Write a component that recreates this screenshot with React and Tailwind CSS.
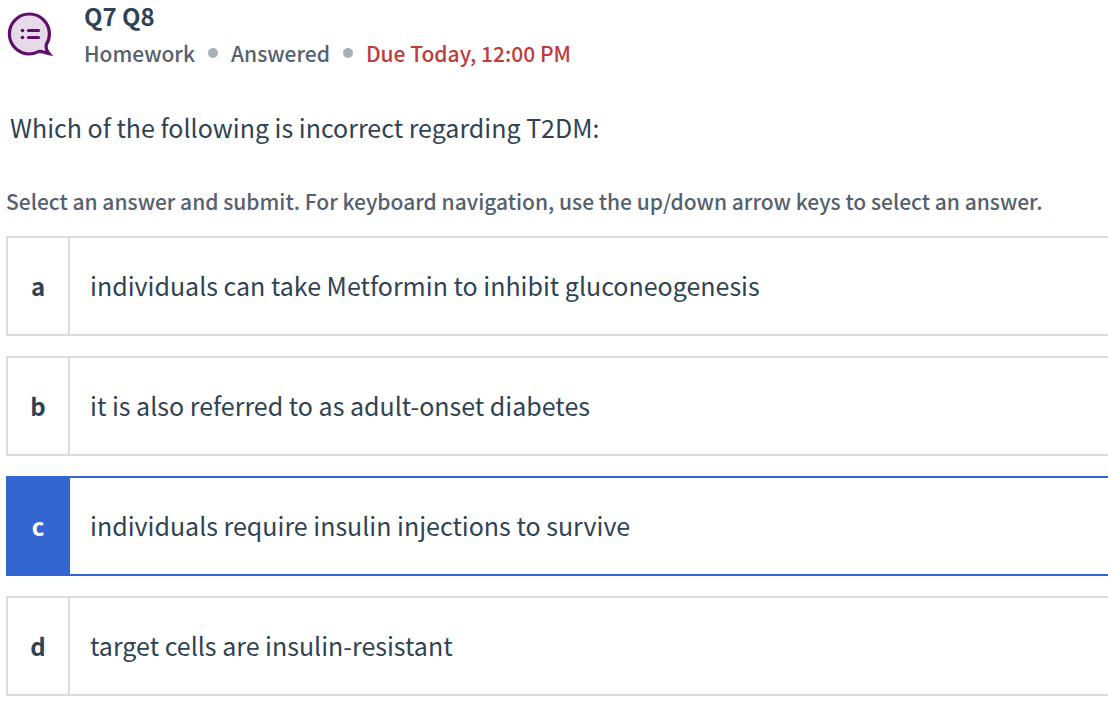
import { useState } from 'react';
import clsx from 'clsx';

const ANSWERS = [
  { id: 'a', text: 'individuals can take Metformin to inhibit gluconeogenesis' },
  { id: 'b', text: 'it is also referred to as adult-onset diabetes' },
  { id: 'c', text: 'individuals require insulin injections to survive' },
  { id: 'd', text: 'target cells are insulin-resistant' },
];

function QuestionIcon() {
  return (
    <svg className="w-11 h-11 shrink-0 overflow-visible" viewBox="0 0 44 44" fill="none" aria-hidden="true">
      <path
        d="M41 41.6C38.8 39.2 37.8 36.6 38.2 32.6C40.4 29.4 41.4 25.8 41.4 22A20 20 0 1 0 21.4 42C25 42 28 41 31.2 39.4C34.6 39.4 37.2 40.9 41 41.6Z"
        fill="#e6dae8"
        stroke="#5f0f68"
        strokeWidth="3.2"
        strokeLinejoin="miter"
        strokeMiterlimit="8"
      />
      <g stroke="#5f0f68" strokeWidth="3.2" strokeLinecap="round">
        <path d="M20.5 18.5H30.5" />
        <path d="M20.5 25.5H30.5" />
      </g>
      <circle cx="14.5" cy="18.5" r="1.8" fill="#5f0f68" />
      <circle cx="14.5" cy="25.5" r="1.8" fill="#5f0f68" />
    </svg>
  );
}

function Dot() {
  return <span className="w-2.5 h-2.5 rounded-full bg-[#a5b0ba]" />;
}

function Answer({ id, text, checked, onSelect }) {
  return (
    <label
      className={clsx(
        'flex h-[100px] cursor-pointer border-2 border-r-0',
        checked ? 'border-[#3466d1]' : 'border-[#d9dce0]'
      )}
    >
      <input
        type="radio"
        name="answer"
        value={id}
        checked={checked}
        onChange={() => onSelect(id)}
        className="sr-only"
      />
      <span
        className={clsx(
          'flex w-[62px] shrink-0 items-center justify-center border-r-2 text-2xl font-bold',
          checked ? 'border-[#3466d1] bg-[#3466d1] text-white' : 'border-[#d9dce0]'
        )}
      >
        {id}
      </span>
      <span className="flex items-center px-5">{text}</span>
    </label>
  );
}

export default function App() {
  const [selected, setSelected] = useState('c');

  return (
    <main className="min-h-screen bg-white pb-4 pl-1.5 font-['Noto_Sans_CJK_SC',sans-serif] text-[25px] text-[#2f4353]">
      <header className="flex items-start gap-8 pl-0.5">
        <div className="pt-3">
          <QuestionIcon />
        </div>
        <div>
          <h1 className="text-2xl leading-8 font-bold">Q7 Q8</h1>
          <div className="flex items-center gap-[13px] pt-1 text-[21px] leading-[34px] font-medium text-[#55616f]">
            <span>Homework</span>
            <Dot />
            <span>Answered</span>
            <Dot />
            <span className="text-[#c03b3b]">Due Today, 12:00 PM</span>
          </div>
        </div>
      </header>

      <h2 className="mt-[41px] pl-1 leading-8">Which of the following is incorrect regarding T2DM:</h2>

      <fieldset>
        <legend className="pt-[42px] pb-[19px] text-[21px] leading-8 font-medium text-[#55616f]">
          Select an answer and submit. For keyboard navigation, use the up/down arrow keys to select an answer.
        </legend>
        <div className="flex flex-col gap-5">
          {ANSWERS.map((answer) => (
            <Answer
              key={answer.id}
              id={answer.id}
              text={answer.text}
              checked={selected === answer.id}
              onSelect={setSelected}
            />
          ))}
        </div>
      </fieldset>
    </main>
  );
}
